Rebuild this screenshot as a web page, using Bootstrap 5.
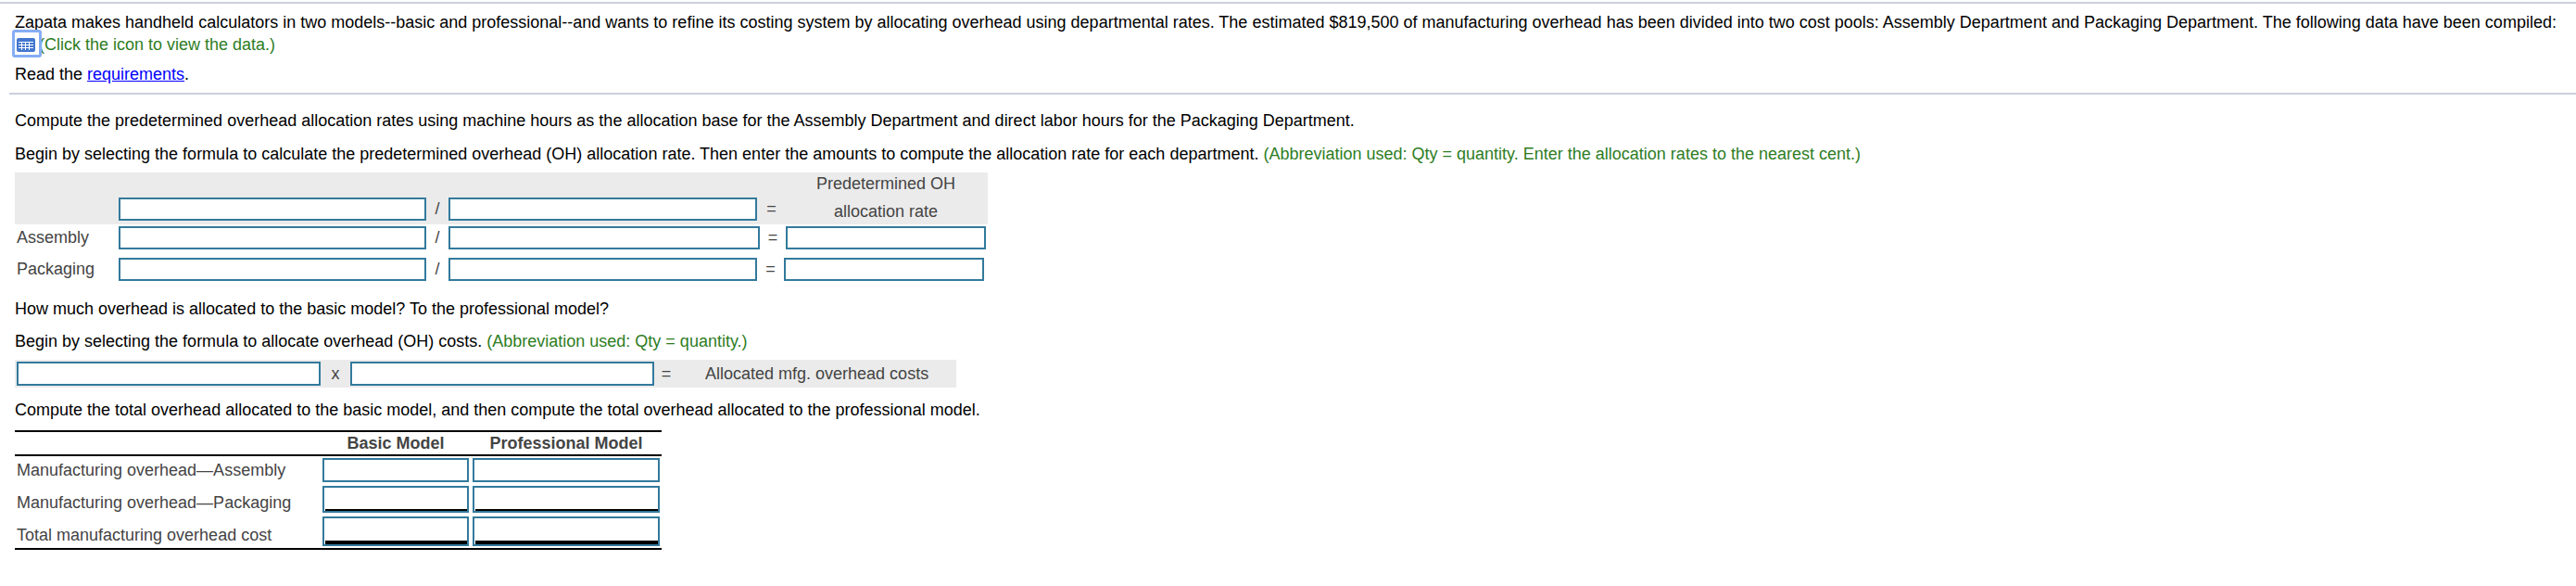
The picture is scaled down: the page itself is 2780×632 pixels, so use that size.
<!DOCTYPE html>
<html lang="en">
<head>
  <meta charset="UTF-8">
  <title>Departmental overhead rates</title>
  <link href="https://cdn.jsdelivr.net/npm/bootstrap@5.3.2/dist/css/bootstrap.min.css" rel="stylesheet">
  <style>
    body { background: #fff; color: #000; font-family: "Liberation Sans", Arial, sans-serif; font-size: 18px; overflow: hidden; }
    .rule-top { height: 2px; margin-top: 2px; background: #ccd0dc; }
    .rule-mid { height: 2px; margin: 8px 0 16px 10px; background: #ccd0dc; }
    .stem { padding-top: 8px; }
    .txt { margin: 0 0 0 16px; line-height: 24px; white-space: nowrap; }
    .gap-12 { margin-top: 12px; }
    .gap-18 { margin-top: 18px; }
    .gap-11 { margin-top: 11px; }
    .hint { color: #2e7d1f; }
    a.req { color: #00f; }
    .data-icon { position: relative; display: inline-block; width: 20px; height: 15px; margin: 0 4px 0 2px; vertical-align: -2px; }
    .data-icon svg { display: block; }
    .data-icon::after { content: ""; position: absolute; left: -5px; top: -9px; width: 32px; height: 30px; border: 3px solid #86adf4; border-radius: 3px; }
    .grid-wrap { margin-left: 16px; color: #444; }
    .band { background: #ebebeb; }
    .box.form-control { display: block; flex: none; height: 25px; min-height: 0; padding: 0; border: 2px solid #337a9c; border-radius: 0; background: #fff; }
    .rate-head { width: 1050px; height: 56px; margin-top: 8px; }
    .rate-row { height: 25px; margin-top: 2px; }
    .rate-row + .rate-row { margin-top: 9px; }
    .lbl { flex: none; width: 112px; padding-left: 2px; line-height: 25px; }
    .op { flex: none; text-align: center; line-height: 25px; }
    .w-332 { width: 332px; }
    .w-333 { width: 333px; }
    .w-336 { width: 336px; }
    .w-216 { width: 216px; }
    .op-24 { width: 24px; }
    .op-28 { width: 28px; }
    .op-29 { width: 29px; }
    .op-31 { width: 31px; }
    .rate-title { width: 216px; height: 56px; padding-bottom: 2px; text-align: center; line-height: 24px; }
    .alloc { width: 1016px; height: 30px; margin: 8px 0 0 16px; padding: 2px 0 0 2px; color: #444; }
    .alloc .box.form-control { height: 26px; }
    .alloc .w-328 { width: 328px; }
    .alloc .w-x { width: 32px; line-height: 26px; }
    .alloc .w-eq { width: 26px; line-height: 26px; }
    .alloc-title { margin-left: 29px; line-height: 26px; }
    .cost { width: 698px; margin: 10px 0 0 16px; border-top: 2px solid #000; border-bottom: 2px solid #000; color: #444; }
    .cost-head { height: 24px; line-height: 24px; font-weight: 700; border-bottom: 2px solid #000; box-sizing: content-box; }
    .cost-lbl { flex: none; width: 332px; padding-left: 2px; }
    .c1 { flex: none; width: 158px; margin-right: 4px; }
    .c2 { flex: none; width: 202px; }
    .cost-row { margin-top: 4px; line-height: 26px; }
    .cost-row .box.form-control { width: 100%; height: 100%; }
    .r1 { height: 26px; margin-top: 2px; }
    .r2 { height: 29px; }
    .r2 .cost-lbl { padding-top: 5px; }
    .r3 { height: 32px; margin-bottom: 2px; }
    .r3 .cost-lbl { padding-top: 7px; }
    .sum { position: relative; height: 100%; }
    .sum::after { content: ""; position: absolute; left: 3px; right: 2px; background: #000; }
    .r2 .sum::after { bottom: 2px; height: 2px; }
    .r3 .sum::after { bottom: 2px; height: 4px; }
  </style>
</head>
<body>
  <div class="rule-top"></div>

  <div class="stem">
    <p class="txt">Zapata makes handheld calculators in two models--basic and professional--and wants to refine its costing system by allocating overhead using departmental rates. The estimated $819,500 of manufacturing overhead has been divided into two cost pools: Assembly Department and Packaging Department. The following data have been compiled:</p>
    <p class="txt"><span class="data-icon"><svg width="20" height="15" viewBox="0 0 20 15"><rect width="20" height="15" rx="2" fill="#4377cf"/><path d="M2 4.500h16M2 7.500h16M2 10.500h16M5.500 4v9M9.500 4v9M13.500 4v9" stroke="#fff" stroke-width="1" fill="none"/></svg></span><span class="hint">(Click the icon to view the data.)</span></p>
    <p class="txt mt-2">Read the <a class="req" href="#">requirements</a>.</p>
  </div>
  <div class="rule-mid"></div>

  <p class="txt">Compute the predetermined overhead allocation rates using machine hours as the allocation base for the Assembly Department and direct labor hours for the Packaging Department.</p>
  <p class="txt gap-12">Begin by selecting the formula to calculate the predetermined overhead (OH) allocation rate. Then enter the amounts to compute the allocation rate for each department. <span class="hint">(Abbreviation used: Qty = quantity. Enter the allocation rates to the nearest cent.)</span></p>

  <div class="grid-wrap">
    <div class="rate-head band d-flex align-items-end">
      <div class="lbl"></div>
      <input class="box form-control w-332 mb-1" type="text" aria-label="Numerator">
      <div class="op op-24 mb-1">/</div>
      <input class="box form-control w-333 mb-1" type="text" aria-label="Denominator">
      <div class="op op-31 mb-1">=</div>
      <div class="rate-title d-flex flex-column justify-content-between"><span>Predetermined OH</span><span>allocation rate</span></div>
    </div>
    <div class="rate-row d-flex">
      <div class="lbl">Assembly</div>
      <input class="box form-control w-332" type="text" aria-label="Assembly numerator">
      <div class="op op-24">/</div>
      <input class="box form-control w-336" type="text" aria-label="Assembly denominator">
      <div class="op op-28">=</div>
      <input class="box form-control w-216" type="text" aria-label="Assembly rate">
    </div>
    <div class="rate-row d-flex">
      <div class="lbl">Packaging</div>
      <input class="box form-control w-332" type="text" aria-label="Packaging numerator">
      <div class="op op-24">/</div>
      <input class="box form-control w-333" type="text" aria-label="Packaging denominator">
      <div class="op op-29">=</div>
      <input class="box form-control w-216" type="text" aria-label="Packaging rate">
    </div>
  </div>

  <p class="txt gap-18">How much overhead is allocated to the basic model? To the professional model?</p>
  <p class="txt gap-11">Begin by selecting the formula to allocate overhead (OH) costs. <span class="hint">(Abbreviation used: Qty = quantity.)</span></p>

  <div class="alloc band d-flex">
    <input class="box form-control w-328" type="text" aria-label="First factor">
    <div class="op w-x">x</div>
    <input class="box form-control w-328" type="text" aria-label="Second factor">
    <div class="op w-eq">=</div>
    <div class="alloc-title">Allocated mfg. overhead costs</div>
  </div>

  <p class="txt gap-12">Compute the total overhead allocated to the basic model, and then compute the total overhead allocated to the professional model.</p>

  <div class="cost">
    <div class="cost-head d-flex">
      <div class="cost-lbl"></div>
      <div class="c1 text-center">Basic Model</div>
      <div class="c2 text-center">Professional Model</div>
    </div>
    <div class="cost-row r1 d-flex">
      <div class="cost-lbl">Manufacturing overhead—Assembly</div>
      <div class="c1"><input class="box form-control" type="text" aria-label="Assembly basic"></div>
      <div class="c2"><input class="box form-control" type="text" aria-label="Assembly professional"></div>
    </div>
    <div class="cost-row r2 d-flex">
      <div class="cost-lbl">Manufacturing overhead—Packaging</div>
      <div class="c1 sum"><input class="box form-control" type="text" aria-label="Packaging basic"></div>
      <div class="c2 sum"><input class="box form-control" type="text" aria-label="Packaging professional"></div>
    </div>
    <div class="cost-row r3 d-flex">
      <div class="cost-lbl">Total manufacturing overhead cost</div>
      <div class="c1 sum"><input class="box form-control" type="text" aria-label="Total basic"></div>
      <div class="c2 sum"><input class="box form-control" type="text" aria-label="Total professional"></div>
    </div>
  </div>

  <script src="https://cdn.jsdelivr.net/npm/bootstrap@5.3.2/dist/js/bootstrap.bundle.min.js"></script>
</body>
</html>
